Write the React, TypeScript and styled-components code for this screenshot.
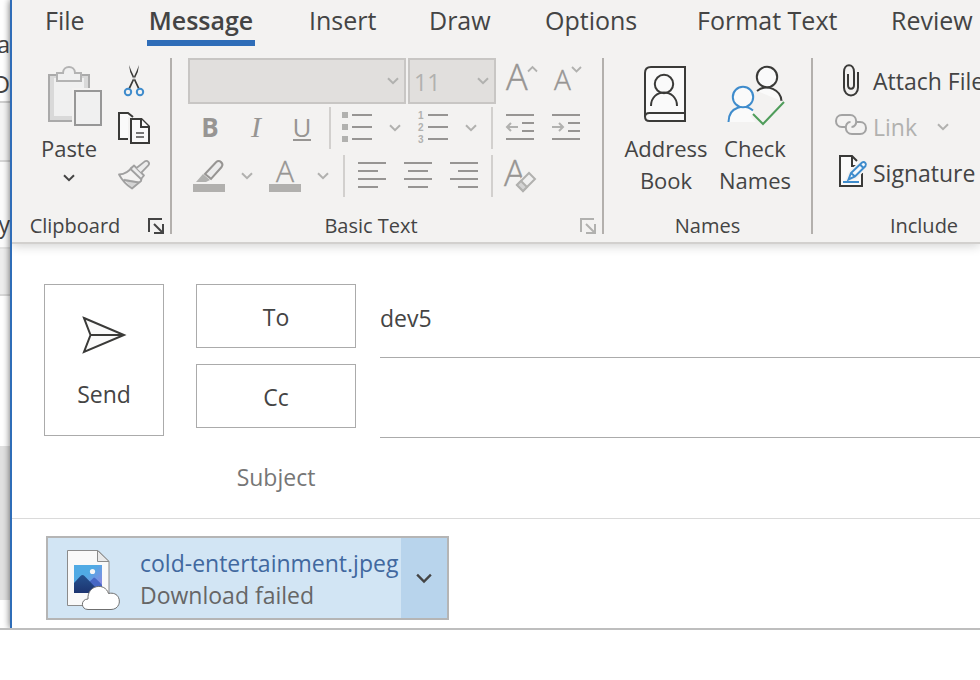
import React from "react";
import styled, { createGlobalStyle, css } from "styled-components";

const ink = "#444444";
const strong = "#3a3a38";
const dim = "#979593";
const faint = "#b1b1af";
const blue = "#2f6db8";
const ribbonBg = "#f3f2f1";

const GlobalStyle = createGlobalStyle`
  * { box-sizing: border-box; }
  body {
    margin: 0;
    background: #ffffff;
    color: ${ink};
    font-family: "Open Sans", "Noto Sans", sans-serif;
    font-size: 23px;
    overflow-x: hidden;
  }
  button, input, select { font: inherit; color: inherit; margin: 0; padding: 0; border: 0; background: none; border-radius: 0; }
  svg { display: block; flex: none; overflow: visible; }
`;

const Screen = styled.div`
  display: flex;
  overflow: hidden;
  border-bottom: 2px solid #bebebe;
`;

/* Sliver of the window that sits behind the message */
const Behind = styled.div`
  width: 10px;
  flex: none;
  overflow: hidden;
  display: flex;
  flex-direction: column;
`;

const Slice = styled.div<{ $h: number; $bg?: string; $line?: string }>`
  height: ${(p) => p.$h}px;
  flex: none;
  background: ${(p) => p.$bg ?? "#ffffff"};
  border-bottom: ${(p) => (p.$line ? `2px solid ${p.$line}` : "0")};
  display: flex;
  align-items: flex-end;
  justify-content: flex-end;
  line-height: 34px;
`;

const Window = styled.main`
  flex: 1;
  min-width: 0;
  overflow: hidden;
  background: #ffffff;
  border-left: 2px solid ${blue};
`;

const WindowShade = styled.div`
  flex: 1;
  min-width: 0;
  display: flex;
  box-shadow: 0 0 7px rgba(0, 0, 0, 0.6);
`;

const Ribbon = styled.header`
  background: ${ribbonBg};
  padding-bottom: 8px;
  border-bottom: 2px solid #d2d0ce;
  box-shadow: 0 2px 10px rgba(0, 0, 0, 0.18);
`;

const Tabs = styled.nav`
  display: grid;
  grid-template-columns: 102px 162px 120px 116px 152px 194px auto;
  justify-content: start;
  height: 58px;
  padding-left: 33px;
`;

const Tab = styled.button<{ $active?: boolean }>`
  justify-self: start;
  height: 46px;
  font-size: 25px;
  line-height: 40px;
  white-space: nowrap;
  border-bottom: 6px solid transparent;
  ${(p) =>
    p.$active &&
    css`
      min-width: 108px;
      font-weight: 600;
      border-color: ${blue};
    `}
`;

const Groups = styled.div`
  display: flex;
`;

const Group = styled.section<{ $w: number }>`
  width: ${(p) => p.$w}px;
  flex: none;
  border-right: 2px solid #b3b0ad;
  display: flex;
  flex-direction: column;
`;

const GroupBody = styled.div<{ $pad: number; $column?: boolean }>`
  height: 142px;
  padding-left: ${(p) => p.$pad}px;
  display: flex;
  flex-direction: ${(p) => (p.$column ? "column" : "row")};
`;

const GroupFooter = styled.footer`
  height: 34px;
  padding-top: 18px;
  display: flex;
  align-items: center;
`;

const GroupName = styled.span`
  flex: 1;
  text-align: center;
  font-size: 20px;
  line-height: 16px;
  white-space: nowrap;
`;

const Launcher = styled.button`
  margin: 0 6px 0 10px;
  width: 16px;
  height: 16px;
`;

const BigButton = styled.button<{ $w: number }>`
  width: ${(p) => p.$w}px;
  padding-top: 8px;
  display: flex;
  flex-direction: column;
  align-items: center;
  font-size: 22px;
  line-height: 32px;
  white-space: nowrap;
`;

const BigIcon = styled.span`
  height: 66px;
`;

const BigLabel = styled.span`
  display: block;
`;

const BigChevron = styled.span`
  padding-top: 10px;
`;

const Stack = styled.div`
  display: flex;
  flex-direction: column;
  gap: 1px;
`;

const Row = styled.div<{ $h: number; $pad?: number }>`
  height: ${(p) => p.$h}px;
  padding-left: ${(p) => p.$pad ?? 0}px;
  display: flex;
  align-items: center;
`;

const Tool = styled.button<{ $w?: number }>`
  width: ${(p) => p.$w ?? 46}px;
  height: 46px;
  color: ${dim};
  display: flex;
  align-items: center;
  justify-content: center;
`;

const Glyph = styled.span<{ $kind: "bold" | "italic" | "underline" }>`
  font-size: 26px;
  line-height: 28px;
  ${(p) => p.$kind === "bold" && "height: 30px; font-weight: 700;"}
  ${(p) => p.$kind === "italic" && 'height: 30px; font-family: "Liberation Serif", serif; font-style: italic; font-size: 30px;'}
  ${(p) => p.$kind === "underline" && `height: 26px; line-height: 25px; border-bottom: 2px solid ${dim};`}
`;

const Divider = styled.span`
  width: 2px;
  height: 42px;
  margin: 0 4px;
  flex: none;
  background: #d2d0ce;
`;

const SelectBox = styled.label<{ $w: number }>`
  width: ${(p) => p.$w}px;
  height: 46px;
  margin-right: 2px;
  display: grid;
  grid-template-columns: 1fr 12px 5px;
  align-items: center;
  background: #e1dfdd;
  border: 2px solid #c8c6c4;
  color: ${faint};

  svg { grid-area: 1 / 2; pointer-events: none; }
`;

const Select = styled.select`
  grid-area: 1 / 1 / 2 / 4;
  width: 100%;
  height: 42px;
  padding: 2px 0 0 4px;
  appearance: none;
  opacity: 1;
`;

const IncludeButton = styled.button`
  height: 46px;
  display: flex;
  align-items: center;
  gap: 6px;
  white-space: nowrap;
  &:disabled { color: ${faint}; }
`;

const ChevronSlot = styled.span`
  padding-left: 14px;
`;

const Header = styled.section`
  display: grid;
  grid-template-columns: 120px 160px minmax(0, 1fr);
  grid-template-rows: 80px 80px 74px;
  column-gap: 32px;
  padding: 40px 0 0 32px;
  border-bottom: 1px solid #dadada;
`;

const SendButton = styled.button`
  grid-row: 1 / 3;
  height: 152px;
  padding-top: 6px;
  border: 1px solid #ababab;
  display: flex;
  flex-direction: column;
  align-items: center;
  justify-content: center;
  gap: 24px;
  line-height: 32px;
`;

const FieldButton = styled.button`
  height: 64px;
  padding-top: 2px;
  border: 1px solid #ababab;
`;

const FieldLine = styled.div`
  height: 74px;
  margin-left: -8px;
  border-bottom: 1px solid #ababab;
`;

const Field = styled.input`
  height: 68px;
  width: 100%;
  outline: 0;
`;

const SubjectLabel = styled.label`
  grid-column: 2;
  text-align: center;
  line-height: 66px;
  color: #767676;
`;

const Attachments = styled.section`
  padding: 17px 0 8px 34px;
  display: flex;
`;

const Attachment = styled.article`
  width: 403px;
  height: 84px;
  display: flex;
  background: #d2e5f4;
  border: 2px solid #b5b5b5;
`;

const FileLink = styled.a`
  flex: 1;
  min-width: 0;
  padding-left: 18px;
  display: flex;
  align-items: center;
  gap: 18px;
  text-decoration: none;
  white-space: nowrap;
`;

const FileText = styled.span`
  display: flex;
  flex-direction: column;
  padding-top: 2px;
  line-height: 32px;
`;

const FileName = styled.span`
  color: #41689f;
`;

const FileStatus = styled.span`
  color: #666666;
`;

const FileMenu = styled.button`
  width: 46px;
  display: flex;
  align-items: center;
  justify-content: center;
  background: #b8d4ec;
`;

const Blank = styled.div`
  height: 50px;
`;

const Chevron = ({ color = faint, w = 12 }: { color?: string; w?: number }) => (
  <svg width={w} height={w === 12 ? 8 : 11} viewBox="0 0 12 8" fill="none" stroke={color} strokeWidth={w === 12 ? 2 : 1.7}>
    <path d="M1 1.2 6 6.2 11 1.2" />
  </svg>
);

const LaunchIcon = ({ color }: { color: string }) => (
  <svg width="16" height="16" viewBox="0 0 16 16" fill="none" stroke={color} strokeWidth="2">
    <path d="M1 14V1H14M6 6 14 14M15 6V15H6" />
  </svg>
);

const PasteIcon = () => (
  <svg width="66" height="60" viewBox="-12 0 66 60" strokeWidth="2">
    <path d="M1 9H41V55H1Z" fill="#d9d9d9" stroke="#aaaaaa" />
    <path d="M6 12H36V50H6Z" fill="#f0f0f0" />
    <path d="M9 7H15C15 -1 27 -1 27 7H33V15H9Z" fill="#f0f0f0" stroke="#b3b3b3" />
    <path d="M24 22H54V60H24Z" fill={ribbonBg} />
    <path d="M27 25H53V59H27Z" fill="#f0f0f0" stroke="#979797" />
  </svg>
);

const ScissorsIcon = () => (
  <svg width="32" height="32" viewBox="0 0 32 32" fill="none">
    <path d="M11 0 12.2 7 20 24 21.6 23.2 13.4 6ZM21 0 19.8 7 12 24 10.4 23.2 18.6 6Z" fill={strong} />
    <circle cx="10" cy="27" r="3.2" stroke="#3f8ccc" strokeWidth="2" />
    <circle cx="22" cy="27" r="3.2" stroke="#3f8ccc" strokeWidth="2" />
  </svg>
);

const CopyIcon = () => (
  <svg width="32" height="32" viewBox="0 0 32 32" fill="#fafafa" stroke={strong} strokeWidth="2">
    <path d="M10 27H1V1H10L15 5V27Z" stroke="none" />
    <path d="M10 27H1V1H10L15 5" fill="none" />
    <path d="M10 5H13V31H10Z" fill={ribbonBg} stroke="none" />
    <path d="M13 7H23.5L31 14.5V31H13Z" />
    <path d="M23 7V15H31" />
    <path d="M18 21H26M18 25H26" stroke="#777777" />
  </svg>
);

const BrushIcon = () => (
  <svg width="32" height="30" viewBox="0 0 32 30" fill="none" stroke="#a0a0a0" strokeWidth="1.8" strokeLinejoin="round">
    <path d="M6 18.5 22 22 13.5 28.5Z" fill="#d4d4d4" stroke="none" />
    <path d="M14 7C11.5 11 7 14 1 14.5C4 20 8.5 25 14 28.5L23 21C24 19 23.5 18 22.5 16.5" />
    <path d="M5.5 20 21 22.5" />
    <path d="M16 5.5 26 15.5 23 19 12.5 9Z" fill="#ececec" />
    <path d="M18.5 8 26.5 1.6C29.5 -0.3 32.4 2.8 30.3 5.3L23.3 12.6" fill="#ececec" />
  </svg>
);

const GrowIcon = () => (
  <svg width="32" height="32" viewBox="0 0 32 32" fill={dim}>
    <text x="1" y="25" fontSize="36" fontWeight="300" stroke={dim} strokeWidth="0.4">A</text>
    <path d="M23 6.500 27.500 2 32 6.500" fill="none" stroke={faint} strokeWidth="1.8" />
  </svg>
);

const ShrinkIcon = () => (
  <svg width="32" height="32" viewBox="0 0 32 32" fill={dim}>
    <text x="3" y="25" fontSize="28" fontWeight="300" stroke={dim} strokeWidth="0.4">A</text>
    <path d="M21 2 25.500 6.500 30 2" fill="none" stroke={faint} strokeWidth="1.8" />
  </svg>
);

const BulletsIcon = () => (
  <svg width="32" height="32" viewBox="0 0 32 32">
    <path d="M1 0h6v6h-6zM1 12h6v6h-6zM1 24h6v6h-6z" fill={faint} />
    <path d="M11 3H31M11 15H31M11 27H31" stroke={dim} strokeWidth="2" />
  </svg>
);

const NumbersIcon = () => (
  <svg width="32" height="32" viewBox="0 0 32 32">
    <g fontFamily="Liberation Sans, sans-serif" fontSize="10" fontWeight="700" fill={faint}>
      <text x="1" y="7">1</text>
      <text x="1" y="19">2</text>
      <text x="1" y="31">3</text>
    </g>
    <path d="M11 3H31M11 15H31M11 27H31" stroke={dim} strokeWidth="2" />
  </svg>
);

const IndentIcon = ({ out }: { out?: boolean }) => (
  <svg width="32" height="32" viewBox="0 0 32 32" fill="none" strokeWidth="2">
    <path d="M2 3H30M18 11H30M18 19H30M2 27H30" stroke={dim} />
    <path d={out ? "M14 15H3M7 11 3 15 7 19" : "M2 15H13M9 11 13 15 9 19"} stroke={faint} />
  </svg>
);

const AlignIcon = ({ x }: { x: number }) => (
  <svg width="32" height="32" viewBox="0 0 32 32" stroke={dim} strokeWidth="2">
    <path d={`M2 3H30M${x} 11h20M2 19H30M${x} 27h20`} />
  </svg>
);

const HighlightIcon = () => (
  <svg width="32" height="32" viewBox="0 0 32 32" strokeWidth="2">
    <path d="M0 24H32V32H0Z" fill="#b1b0ae" />
    <path d="M3 22 10 14 17 20 13 22Z" fill={faint} />
    <path d="M12 14 23 2.2C26.5 -0.8 31.2 3.4 28.6 7L18 18.8Z" fill="#ececec" stroke={dim} />
  </svg>
);

const FontColorIcon = () => (
  <svg width="32" height="32" viewBox="0 0 32 32">
    <path d="M0 24H32V32H0Z" fill="#b1b0ae" />
    <text x="16" y="22" fontSize="30" fontWeight="300" stroke={dim} strokeWidth="0.4" textAnchor="middle" fill={dim}>A</text>
  </svg>
);

const ClearIcon = () => (
  <svg width="32" height="32" viewBox="0 0 32 32">
    <text x="0" y="26" fontSize="36" fontWeight="300" stroke={dim} strokeWidth="0.4" fill={dim}>A</text>
    <path d="M10 25 25 10 34 19 19 34Z" fill={ribbonBg} />
    <path d="M13 25 25 13 31 19 19 31Z" fill="#f0f0f0" stroke={faint} strokeWidth="2" />
    <path d="M13 25 17 21 23 27 19 31Z" fill="#d4d4d4" stroke={faint} strokeWidth="2" />
  </svg>
);

const AddressBookIcon = () => (
  <svg width="44" height="56" viewBox="0 0 44 56" fill="#fafafa" stroke={strong} strokeWidth="2">
    <path d="M41 1V55H5.5Q1 55 1 50.5V7Q1 1 7 1Z" />
    <path d="M1 51Q1 47 5.5 47H41" fill="none" />
    <circle cx="20" cy="18" r="9.2" />
    <path d="M7 40C7 22 33 22 33 40" fill="none" />
  </svg>
);

const CheckNamesIcon = () => (
  <svg width="56" height="60" viewBox="0 0 56 60" fill="#fafafa" strokeWidth="2">
    <path d="M30 25C40 17 54 24 54.500 35" stroke={strong} />
    <circle cx="40" cy="11" r="10.200" stroke={strong} />
    <path d="M1.500 56C1.500 39 19 38 26 44.500L30 54V56Z" stroke="none" />
    <path d="M1.500 56C1.500 40 18 38 26 44.500" fill="none" stroke="#3f8ccc" />
    <circle cx="16" cy="31" r="10.200" stroke="#3f8ccc" />
    <path d="M26 48 36 58 57 37" fill="none" stroke={ribbonBg} strokeWidth="7" />
    <path d="M26 48 36 58 57 36" fill="none" stroke="#4f9d5b" />
  </svg>
);

const ClipIcon = () => (
  <svg width="32" height="32" viewBox="0 0 32 32" fill="none" stroke={strong} strokeWidth="2">
    <path d="M23 7V22.500C23 33 9 33 9 22.500V7C9 -2 19 -2 19 7V20C19 25 13 25 13 20V9" />
  </svg>
);

const LinkIcon = () => (
  <svg width="32" height="26" viewBox="0 0 32 26" fill="none" stroke="#a3a3a3" strokeWidth="2">
    <path d="M10 13H7C-1 13 -1 1 7 1H15C23 1 23 13 16.500 13" />
    <path d="M22 8H25C33 8 33 20 25 20H17C9 20 9 8 15.500 8" />
  </svg>
);

const SignatureIcon = () => (
  <svg width="32" height="36" viewBox="0 0 32 36" fill="none" strokeWidth="2">
    <path d="M5 1H17L27 11V31H5Z" fill="#fafafa" />
    <path d="M27 18V31H5V1H17L22 6M17 1V11H21" stroke={strong} />
    <path d="M8 27H24" stroke="#3f8ccc" />
    <path d="M13 24 16 17 27 7Q32 6 31 11L21 22Z" fill="#e8f1f9" stroke={ribbonBg} strokeWidth="4" />
    <path d="M13.500 24.500 16 18 27 7.500C29.500 6 32 9 30.500 11L20 21.500ZM25 9.500 28.500 13M16 18 20 21.500" fill="#f6f9fc" stroke="#3f8ccc" />
    <path d="M8 27H24" stroke="#3f8ccc" />
  </svg>
);

const SendIcon = () => (
  <svg width="44" height="38" viewBox="0 0 44 38" fill="#fafafa" stroke={strong} strokeWidth="2">
    <path d="M2 2 42 19 2 36 8.500 19Z" />
    <path d="M8.500 19H42" />
  </svg>
);

const FileIcon = () => (
  <svg width="56" height="64" viewBox="0 0 56 64">
    <defs>
      <linearGradient id="sky" x1="0" y1="0" x2="1" y2="1">
        <stop offset="0.4" stopColor="#50aae4" />
        <stop offset="1" stopColor="#a17be0" />
      </linearGradient>
      <linearGradient id="hill" x1="0" y1="0" x2="0" y2="1">
        <stop offset="0" stopColor="#25528f" />
        <stop offset="1" stopColor="#1c3470" />
      </linearGradient>
    </defs>
    <path d="M1.500 4.500H32L43 15.500V59.500H1.500Z" fill="#f9f9f9" stroke="#8b8b8b" />
    <path d="M31.500 4.500V15.500H43Z" fill="#e9e9e9" stroke="#8b8b8b" />
    <path d="M8 19H36V47H8Z" fill="url(#sky)" />
    <path d="M21 38 28 31.500Q29.500 31.500 36 39V47H21Z" fill="#4767c4" />
    <path d="M8 37 14.500 30Q16.500 28 18.500 30L32 44V47H8Z" fill="url(#hill)" />
    <circle cx="26.500" cy="25.500" r="2.600" fill="#f6f6f6" />
    <path
      d="M22 63.500C14.500 63.500 14.500 53 22 53C21 39 39 36 42.500 47.500C56 44.500 57 63.500 45 63.500Z"
      fill="#ffffff"
      stroke="#6f6f6f"
    />
  </svg>
);

export default function App() {
  return (
    <>
      <GlobalStyle />
      <Screen>
        <Behind aria-hidden="true">
          <Slice $h={61}>a</Slice>
          <Slice $h={42} $line="#cfcfcf">D</Slice>
          <Slice $h={59} $bg="#f5f5f5" $line="#d6d6d6" />
          <Slice $h={79} $bg="#fcfcfc">y</Slice>
          <Slice $h={8} $bg="#fcfcfc" $line="#e2e2e2" />
          <Slice $h={47} $bg="#eeeeee" $line="#d8d8d8" />
          <Slice $h={150} />
          <Slice $h={154} $bg="#e1e1e1" />
        </Behind>
        <WindowShade>
          <Window>
            <Ribbon>
              <Tabs aria-label="Ribbon tabs">
                <Tab>File</Tab>
                <Tab $active>Message</Tab>
                <Tab>Insert</Tab>
                <Tab>Draw</Tab>
                <Tab>Options</Tab>
                <Tab>Format Text</Tab>
                <Tab>Review</Tab>
              </Tabs>
              <Groups>
                <Group $w={160}>
                  <GroupBody $pad={11}>
                    <BigButton $w={92}>
                      <BigIcon><PasteIcon /></BigIcon>
                      <BigLabel>Paste</BigLabel>
                      <BigChevron><Chevron color={ink} /></BigChevron>
                    </BigButton>
                    <Stack>
                      <Tool $w={38} aria-label="Cut"><ScissorsIcon /></Tool>
                      <Tool $w={38} aria-label="Copy"><CopyIcon /></Tool>
                      <Tool $w={38} aria-label="Format Painter"><BrushIcon /></Tool>
                    </Stack>
                  </GroupBody>
                  <GroupFooter>
                    <GroupName>Clipboard</GroupName>
                    <Launcher aria-label="Clipboard options"><LaunchIcon color={ink} /></Launcher>
                  </GroupFooter>
                </Group>

                <Group $w={432}>
                  <GroupBody $pad={15} $column>
                    <Row $h={46} $pad={1}>
                      <SelectBox $w={218}>
                        <Select disabled aria-label="Font"><option></option></Select>
                        <Chevron />
                      </SelectBox>
                      <SelectBox $w={88}>
                        <Select disabled aria-label="Font size"><option>11</option></Select>
                        <Chevron />
                      </SelectBox>
                      <Tool disabled aria-label="Grow font"><GrowIcon /></Tool>
                      <Tool disabled aria-label="Shrink font"><ShrinkIcon /></Tool>
                    </Row>
                    <Row $h={48}>
                      <Tool disabled><Glyph $kind="bold">B</Glyph></Tool>
                      <Tool disabled><Glyph $kind="italic">I</Glyph></Tool>
                      <Tool disabled><Glyph $kind="underline">U</Glyph></Tool>
                      <Divider />
                      <Tool $w={44} disabled aria-label="Bullets"><BulletsIcon /></Tool>
                      <Tool $w={32} disabled aria-label="Bullet styles"><Chevron /></Tool>
                      <Tool $w={44} disabled aria-label="Numbering"><NumbersIcon /></Tool>
                      <Tool $w={32} disabled aria-label="Number styles"><Chevron /></Tool>
                      <Divider />
                      <Tool disabled aria-label="Decrease indent"><IndentIcon out /></Tool>
                      <Tool disabled aria-label="Increase indent"><IndentIcon /></Tool>
                    </Row>
                    <Row $h={48}>
                      <Tool $w={44} disabled aria-label="Highlight"><HighlightIcon /></Tool>
                      <Tool $w={32} disabled aria-label="Highlight colors"><Chevron /></Tool>
                      <Tool $w={44} disabled aria-label="Font color"><FontColorIcon /></Tool>
                      <Tool $w={32} disabled aria-label="Font colors"><Chevron /></Tool>
                      <Divider />
                      <Tool disabled aria-label="Align left"><AlignIcon x={2} /></Tool>
                      <Tool disabled aria-label="Center"><AlignIcon x={6} /></Tool>
                      <Tool disabled aria-label="Align right"><AlignIcon x={10} /></Tool>
                      <Divider />
                      <Tool disabled aria-label="Clear formatting"><ClearIcon /></Tool>
                    </Row>
                  </GroupBody>
                  <GroupFooter>
                    <GroupName>Basic Text</GroupName>
                    <Launcher disabled aria-label="Text options"><LaunchIcon color={faint} /></Launcher>
                  </GroupFooter>
                </Group>

                <Group $w={209}>
                  <GroupBody $pad={16}>
                    <BigButton $w={92}>
                      <BigIcon><AddressBookIcon /></BigIcon>
                      <BigLabel>Address<br />Book</BigLabel>
                    </BigButton>
                    <BigButton $w={86}>
                      <BigIcon><CheckNamesIcon /></BigIcon>
                      <BigLabel>Check<br />Names</BigLabel>
                    </BigButton>
                  </GroupBody>
                  <GroupFooter><GroupName>Names</GroupName></GroupFooter>
                </Group>

                <Group $w={224}>
                  <GroupBody $pad={22} $column>
                    <IncludeButton><ClipIcon />Attach File</IncludeButton>
                    <IncludeButton disabled><LinkIcon />Link<ChevronSlot><Chevron /></ChevronSlot></IncludeButton>
                    <IncludeButton><SignatureIcon />Signature</IncludeButton>
                  </GroupBody>
                  <GroupFooter><GroupName>Include</GroupName></GroupFooter>
                </Group>
              </Groups>
            </Ribbon>

            <Header>
              <SendButton><SendIcon />Send</SendButton>
              <FieldButton>To</FieldButton>
              <FieldLine><Field aria-label="To" defaultValue="dev5" /></FieldLine>
              <FieldButton>Cc</FieldButton>
              <FieldLine><Field aria-label="Cc" /></FieldLine>
              <SubjectLabel htmlFor="subject">Subject</SubjectLabel>
              <Field id="subject" />
            </Header>

            <Attachments>
              <Attachment>
                <FileLink href="#attachment">
                  <FileIcon />
                  <FileText>
                    <FileName>cold-entertainment.jpeg</FileName>
                    <FileStatus>Download failed</FileStatus>
                  </FileText>
                </FileLink>
                <FileMenu aria-label="Attachment options"><Chevron color={ink} w={18} /></FileMenu>
              </Attachment>
            </Attachments>
          </Window>
        </WindowShade>
      </Screen>
      <Blank />
    </>
  );
}
